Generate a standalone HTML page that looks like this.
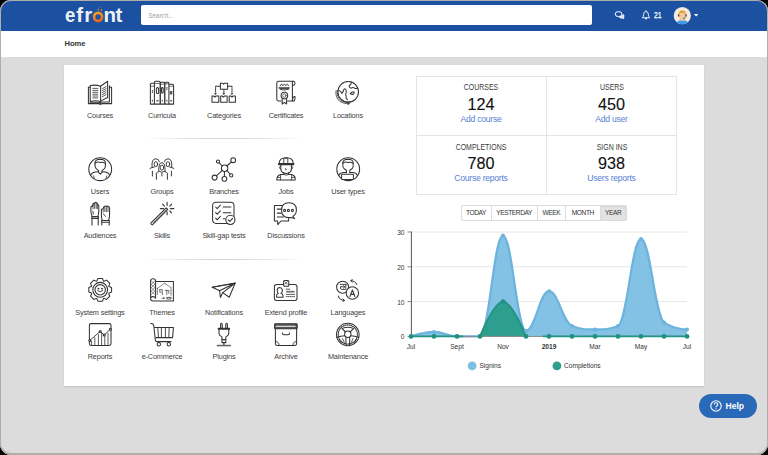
<!DOCTYPE html>
<html><head><meta charset="utf-8">
<style>
*{margin:0;padding:0;box-sizing:border-box}
html,body{width:768px;height:455px;overflow:hidden;background:#000;font-family:"Liberation Sans",sans-serif}
.abs{position:absolute}
.logo{position:absolute;top:3.3px;font-size:20.5px;line-height:24px;font-weight:bold;color:#eef0f5}
#win{position:absolute;left:0;top:0;width:768px;height:455px;border-radius:11px;background:#dcdcdc;overflow:hidden}
#frame{position:absolute;left:0;top:0;width:768px;height:455px;border-radius:11px;border-style:solid;border-color:#b0aeab;border-width:1.3px 1.8px 2px 1.4px}
#hdr{position:absolute;left:0;top:0;width:768px;height:30.8px;background:#1b51a0}
#crumb{position:absolute;left:0;top:30.8px;width:768px;height:26.2px;background:#fff}
#search{position:absolute;left:141px;top:5.4px;width:451px;height:19.8px;background:#fff;border-radius:2px}
#card{position:absolute;left:64px;top:65px;width:640px;height:321px;background:#fff;box-shadow:0 1.5px 1.5px rgba(60,60,110,0.13)}
.ic{position:absolute;width:32px;height:32px;fill:none;stroke:#333;stroke-width:1.05;stroke-linecap:round;stroke-linejoin:round}
.lb{position:absolute;width:80px;text-align:center;font-size:7.3px;line-height:10px;color:#404040;white-space:nowrap;letter-spacing:-0.15px}
.sep{position:absolute;left:143px;width:162px;height:1px;background:linear-gradient(90deg,rgba(220,220,220,0),#dadada 35%,#d8d8d8 50%,#dadada 65%,rgba(220,220,220,0))}
.sl{position:absolute;width:120px;text-align:center;font-size:8.5px;line-height:9px;color:#3a3a3a;white-space:nowrap;transform:scaleX(0.82);transform-origin:50% 0}
.sn{position:absolute;width:120px;text-align:center;font-size:16.2px;-webkit-text-stroke:0.1px #111;line-height:18px;color:#111;white-space:nowrap}
.sa{position:absolute;width:120px;text-align:center;font-size:8.6px;line-height:10px;color:#5682d4;white-space:nowrap;letter-spacing:-0.25px}
.tb{position:absolute;top:205.3px;height:15.6px;text-align:center;font-size:6.6px;color:#333;letter-spacing:-0.4px}
.tb span{position:absolute;left:0;right:0;line-height:8px}
.yl{position:absolute;left:384px;width:20.5px;text-align:right;font-size:6.6px;line-height:8px;color:#333}
.xl{position:absolute;width:40px;text-align:center;font-size:6.6px;line-height:8px;color:#333}
.lg{position:absolute;font-size:6.6px;line-height:8px;color:#333;white-space:nowrap}
#help{position:absolute;left:699px;top:393.8px;width:58px;height:24.5px;border-radius:12.5px;background:#2a69b7}
</style></head><body>
<div id="win">
 <div id="hdr">
  <div class="logo" style="left:64.6px;transform:scaleX(0.9);transform-origin:0 0">e</div><div class="logo" style="left:76.2px">f</div><div class="logo" style="left:84.2px">r</div><div class="logo" style="left:103.6px">n</div><div class="logo" style="left:115.4px">t</div>
  <svg class="abs" style="left:90px;top:4px" width="16" height="22" viewBox="0 0 16 22">
   <defs><linearGradient id="og" x1="0" y1="0" x2="0.3" y2="1"><stop offset="0" stop-color="#f7a21f"/><stop offset="1" stop-color="#ec6a1c"/></linearGradient></defs>
   <circle cx="8.1" cy="12.9" r="4.0" fill="none" stroke="url(#og)" stroke-width="2.7"/>
   <circle cx="8.4" cy="5.6" r="0.75" fill="#f49a22"/><circle cx="11.4" cy="6.0" r="0.85" fill="#f49a22"/><circle cx="10" cy="3.6" r="0.45" fill="#e8902a"/><circle cx="11.6" cy="2.4" r="0.35" fill="#d08a40"/>
  </svg>
  <div id="search"><div class="abs" style="left:7px;top:5.43px;font-size:8px;line-height:10px;font-style:italic;color:#a0a0a0;transform:scaleX(0.8);transform-origin:0 0">Search...</div></div>
  <svg class="abs" style="left:612px;top:9px" width="16" height="12" viewBox="0 0 16 12" fill="none" stroke="#fff" stroke-width="1">
   <ellipse cx="6.6" cy="5.1" rx="3.4" ry="2.5"/><path d="M7.4,8.0 Q10.4,8.4 11.4,5.6 Q12.4,6.8 11.6,8.4 L11.8,9.4 L10.2,9.0 Q8.4,9.4 7.4,8.0 Z" fill="#fff" fill-opacity="0.75"/>
  </svg>
  <svg class="abs" style="left:640px;top:9px" width="12" height="12" viewBox="0 0 12 12" fill="none" stroke="#fff" stroke-width="0.9">
   <path d="M2.2,8.8 Q3.6,7.8 3.6,5.6 Q3.6,2.6 6,2.5 Q8.4,2.6 8.4,5.6 Q8.4,7.8 9.8,8.8 Z"/><circle cx="6" cy="1.8" r="0.6" fill="#fff" stroke="none"/><path d="M5.1,9.5 H6.9" stroke-width="1.3"/>
  </svg>
  <div class="abs" style="left:653.6px;top:9.99px;font-size:8.4px;line-height:10px;color:#fff;-webkit-text-stroke:0.25px #fff;transform:scaleX(0.82);transform-origin:0 0">21</div>
  <svg class="abs" style="left:673px;top:7px" width="18" height="18" viewBox="0 0 18 18">
   <defs><clipPath id="av"><circle cx="9.3" cy="8.7" r="8.6"/></clipPath></defs>
   <circle cx="9.3" cy="8.7" r="8.6" fill="#f4ebdf"/>
   <g clip-path="url(#av)">
    <path d="M2,18 Q3,13.2 9.3,13.2 Q15.6,13.2 16.6,18 Z" fill="#3b9be6"/>
    <path d="M6.6,12.6 Q9.3,15.4 12,12.6 L11.4,11 H7.2 Z" fill="#efc39a"/>
    <ellipse cx="9.3" cy="8.4" rx="3.4" ry="4.2" fill="#f0c8a0"/>
    <path d="M5.8,7.4 Q5.6,3.6 9.3,3.4 Q13,3.6 12.8,7.4 Q12,5.4 9.3,5.4 Q6.6,5.4 5.8,7.4 Z" fill="#e79a2c"/>
    <path d="M5.6,7.2 V9.6 M13,7.2 V9.6" stroke="#5a2a1a" stroke-width="1.2"/>
    <path d="M12.6,9.6 Q12.4,11.6 10,11.8" stroke="#333" stroke-width="0.6" fill="none"/>
   </g>
  </svg>
  <svg class="abs" style="left:694px;top:13.5px" width="5" height="3" viewBox="0 0 5 3"><path d="M0,0 H4.4 L2.2,2.6 Z" fill="#fff"/></svg>
 </div>
 <div id="crumb"><div class="abs" style="left:64.5px;top:7.87px;font-size:7.6px;line-height:9px;font-weight:bold;color:#333">Home</div></div>
 <div id="card"></div>
 <div class="sep" style="top:138px"></div>
 <div class="sep" style="top:259px"></div>
 <svg class="ic" style="left:84px;top:77px" viewBox="0 0 32 32">
<path d="M6.2,24.6 V8.6 Q11.3,7.4 16.6,9.2 V24.4 Q11.5,23.0 6.2,24.6 Z"/>
<path d="M16.9,9.0 L23.6,4.2 V20.5 L16.9,23.9"/>
<path d="M4.4,10.2 V26.6 H14.2 Q15.9,26.6 16.3,27.6 Q16.8,26.6 18.4,26.6 H27.6 V10.2 H25.4 M25.4,8.8 V25.0 H18.2 Q16.8,25.2 16.4,26.0"/>
<path d="M4.4,10.2 H6.2 M6.2,25.2 H14 Q15.6,25.2 16.4,26.2"/>
<path d="M8.8,11.4 H13.8 M8.8,13.4 H13.8 M8.8,15.3 H13.8 M8.8,17.2 H13.8 M8.8,19.0 H13.8 M8.8,20.9 H13.8" stroke-width="0.8"/>
<path d="M18.4,11.6 L22,9.6 M18.4,13.6 L22,11.6 M18.4,15.6 L22,13.6 M18.4,17.6 L22,15.6 M18.4,19.6 L22,17.6" stroke-width="0.8"/>
</svg><div class="lb" style="left:60px;top:110.57px">Courses</div><svg class="ic" style="left:146px;top:77px" viewBox="0 0 32 32">
<path d="M4.4,27 V7.6 Q4.4,6.3 5.6,6.3 H8.4 M8.4,27 V5.4 Q8.4,4.2 9.6,4.2 H12.9 Q14.1,4.2 14.1,5.4 V27 M14.4,27 V6.0 Q14.4,5.3 15.1,5.3 H17.9 Q18.6,5.3 18.6,6.0 V27 M18.9,27 V6.3 Q18.9,5.3 19.9,5.3 H21.9 Q22.9,5.3 22.9,6.3 V27 M22.9,7.2 H26.6 Q27.6,7.2 27.6,8.2 V27 M4.4,27.1 H27.6"/>
<rect x="10.4" y="10.6" width="2.2" height="5.9" rx="1.1"/>
<rect x="15.5" y="10.6" width="1.7" height="5.5" rx="0.85"/>
<path d="M8.6,6.4 H13.9 M14.6,7.2 H18.4 M19.1,6.8 H22.7 M23.1,9.2 H27.4 M4.6,9.2 H8.2" stroke-width="0.7"/>
<path d="M6.4,13.4 V14.0 M6.4,15.0 V15.6 M20.9,10.4 V11 M20.9,12 V12.6 M6.4,23.2 V24.2 M16.3,23.2 V24.2 M20.9,23.2 V24.2" stroke-width="0.9"/>
<rect x="23.9" y="14" width="2.4" height="3.5" fill="#555" stroke="none"/>
<rect x="10.3" y="23.2" width="2.4" height="1.2" fill="#444" stroke="none"/>
<rect x="24.2" y="23.2" width="2" height="1.2" fill="#444" stroke="none"/>
</svg><div class="lb" style="left:122px;top:110.57px">Curricula</div><svg class="ic" style="left:208px;top:77px" viewBox="0 0 32 32">
<path d="M12.4,12.3 V6.2 H14.6 L15.6,7.2 L16.6,6.2 H19.6 V12.3 Z"/>
<path d="M4.0,25.2 V19 H5.6 L6.8,20 L8.0,19 H10.8 V25.2 Z M12.7,25.2 V19 H14.2 L15.4,20 L16.6,19 H19.1 V25.2 Z M21.2,25.2 V19 H22.8 L24,20 L25.2,19 H27.4 V25.2 Z"/>
<path d="M12.4,9.2 H7.6 V10.2 M19.6,9.2 H24.0 V10.2 M15.9,12.3 V13.2"/>
<path d="M7.6,11.6 V15.6 M15.9,14.2 V15.6 M24.0,11.6 V15.6" stroke-dasharray="1.1 1.0"/>
<path d="M6.8,16.0 L8.4,16.0 L7.6,17.6 Z M15.1,16.0 L16.7,16.0 L15.9,17.6 Z M23.2,16.0 L24.8,16.0 L24,17.6 Z" fill="#333" stroke-width="0.5"/>
</svg><div class="lb" style="left:184px;top:110.57px">Categories</div><svg class="ic" style="left:270px;top:77px" viewBox="0 0 32 32">
<path d="M22.2,23.9 H17.6 M11.2,23.9 H8.4 Q6.8,23.9 6.8,22.3 V5.9 Q6.8,4.3 8.4,4.3 H23.6"/>
<path d="M23.6,4.3 Q25.2,4.6 25,6.6 Q24.6,8.4 22.4,8.4 M22.4,4.6 V23.6 Q22.8,19 25,19.6 Q25.4,22 24.2,23.9 H22.4"/>
<path d="M10.2,8.8 L11.6,6.8 L13,8.8 L14.4,6.8 L15.8,8.8 L17.2,6.8 L18.6,8.8" stroke-width="0.8"/>
<path d="M9.2,10.4 H19.4 L18.8,12.0 H9.8 Z" fill="#555" stroke-width="0.6"/>
<path d="M10.4,12.4 Q14.4,14.0 18.4,12.4" stroke-width="0.8"/>
<path d="M12.2,21.6 V27.0 L14.4,25.4 L16.6,27.0 V21.6"/>
<circle cx="14.4" cy="18.6" r="3.3" fill="#fff"/>
<circle cx="14.4" cy="18.6" r="1.7" stroke-width="0.7"/>
</svg><div class="lb" style="left:246px;top:110.57px">Certificates</div><svg class="ic" style="left:332px;top:77px" viewBox="0 0 32 32">
<circle cx="16.2" cy="14.8" r="10.3"/>
<path d="M5.2,13.4 Q4.4,19.6 8.8,23.4 Q12.6,26.2 18.6,25.2" stroke-width="0.8"/>
<path d="M4.0,13.8 Q3.0,20.2 7.8,24.4 Q12,27.4 17.8,26.4" stroke-width="0.8"/>
<path d="M16.2,25.6 V27.4" stroke-width="1.2"/>
<path d="M18.8,4.8 Q19.8,6.4 18.8,7.4 Q16.8,8.0 17.4,10.0 Q18.6,11.8 20,10.8 Q21.4,10.0 22.6,11.2 Q24.2,11.8 25.6,11.0" />
<path d="M6.8,13.6 Q9.4,14.2 9.8,16.4 Q11.4,14.8 12.0,12.2 Q13.4,11.0 14.0,13.2 Q14.8,15.2 13.6,17.4 Q14.4,19.4 14.2,21.4 L15.4,22.6"/>
<path d="M18.4,16.6 Q19.4,15.0 21.8,14.8 Q22.8,15.6 21.2,17.2 Q19.6,17.8 18.4,16.6 Z"/>
</svg><div class="lb" style="left:308px;top:110.57px">Locations</div><svg class="ic" style="left:84px;top:153px" viewBox="0 0 32 32">
<circle cx="16.2" cy="16.2" r="11.4"/>
<path d="M11.0,10.4 Q10.6,6.4 16.2,6.2 Q21.8,6.4 21.4,10.4 Q18.8,8.6 16.6,9.6 Q13.6,8.2 11.0,10.4 Z"/>
<path d="M11.0,10.4 Q10.6,14.4 12.4,15.8 L14.6,17.6 V19.4 L16.3,21.2 L18.0,19.4 V17.6 L20.2,15.8 Q21.8,14.4 21.4,10.4"/>
<path d="M6.8,22.2 Q7.6,19.6 11.0,19.0 L14.6,18.8 M18.0,18.8 L21.4,19.0 Q24.8,19.6 25.6,22.2"/>
<path d="M9.6,22.8 L10.4,25.4 M22.8,22.8 L22.0,25.4" stroke-width="0.8"/>
</svg><div class="lb" style="left:60px;top:187.07px">Users</div><svg class="ic" style="left:146px;top:153px" viewBox="0 0 32 32">
<g stroke-width="0.95">
<path d="M6.1,14.4 Q5.2,5.8 9.7,5.8 Q12.8,5.8 13.4,8.8"/>
<ellipse cx="9.85" cy="11.2" rx="1.75" ry="2.5"/>
<path d="M4.0,15.4 Q5.8,14.4 8.2,14.0 M6.4,18.2 V23.0"/>
<path d="M25.7,14.4 Q26.6,5.8 22.1,5.8 Q19.0,5.8 18.4,8.8"/>
<ellipse cx="21.95" cy="11.2" rx="1.75" ry="2.5"/>
<path d="M27.8,15.4 Q26.0,14.4 23.6,14.0 M25.4,18.2 V23.0"/>
<path d="M12.8,18.4 Q12.2,9.6 15.9,9.6 Q19.6,9.6 19.0,18.4"/>
<ellipse cx="15.9" cy="14.6" rx="1.8" ry="2.6"/>
<path d="M10.2,20.4 Q11.2,18.6 13.6,18.4 Q15.9,20.2 18.2,18.4 Q20.6,18.6 21.6,20.4 M10.4,20.8 V26.4 M21.4,20.8 V26.4 M15.9,20.4 V23.0"/>
</g>
</svg><div class="lb" style="left:122px;top:187.07px">Groups</div><svg class="ic" style="left:208px;top:153px" viewBox="0 0 32 32">
<circle cx="16.6" cy="15.2" r="3.2"/>
<circle cx="10.0" cy="8.6" r="1.6"/>
<circle cx="25.2" cy="7.2" r="2.4"/>
<circle cx="6.6" cy="24.6" r="2.5"/>
<circle cx="16.4" cy="25.8" r="2.4"/>
<circle cx="23.2" cy="22.4" r="1.6"/>
<path d="M11.2,9.8 L14.4,13 M23.4,9 L18.8,13 M8.4,22.8 L14.3,17.3 M16.4,18.4 V23.4 M18.9,17.4 L22.0,21.2"/>
</svg><div class="lb" style="left:184px;top:187.07px">Branches</div><svg class="ic" style="left:270px;top:153px" viewBox="0 0 32 32">
<path d="M9.2,10.6 Q9.2,4.8 16.2,4.8 Q23.2,4.8 23.2,10.6 Z" />
<path d="M8.6,10.4 H23.8 V11.6 H8.6 Z" fill="#333"/>
<path d="M13.8,10.4 V5.2 H17.8 V10.4" stroke-width="0.9"/>
<path d="M10.8,11.8 V15.8 Q10.8,20.4 16.2,20.4 Q21.4,20.4 21.4,15.8 V11.8"/>
<path d="M10.6,13.4 Q9.2,13.4 9.4,14.8 Q9.6,16 10.8,16 M21.6,13.4 Q23,13.4 22.8,14.8 Q22.6,16 21.4,16" stroke-width="0.8"/>
<path d="M15.6,15.4 L16.4,16.8 H15.6" stroke-width="0.8"/>
<path d="M13.8,19.8 V21.4 M18.6,19.8 V21.4 M6.8,27 Q6.6,22.6 10.8,21.6 L13.8,21.4 Q16.2,22.6 18.6,21.4 L21.6,21.6 Q25.6,22.6 25.2,27 Z"/>
<path d="M10.6,21.8 V27 M21.6,21.8 V27 M7.4,24.4 H10.6 M21.6,24.4 H24.8" stroke-width="0.8"/>
</svg><div class="lb" style="left:246px;top:187.07px">Jobs</div><svg class="ic" style="left:332px;top:153px" viewBox="0 0 32 32">
<circle cx="16.2" cy="16.2" r="11.4"/>
<path d="M10.8,10.4 Q10.4,6.4 16.0,6.2 Q21.6,6.4 21.2,10.4 Q18.6,8.6 16.4,9.6 Q13.4,8.2 10.8,10.4 Z"/>
<path d="M10.8,10.4 Q10.4,14.2 12.2,15.8 L14.4,17.2 V19.6 M17.8,19.6 V17.2 L20.0,15.8 Q21.6,14.2 21.2,10.4"/>
<path d="M7.0,22.4 Q7.6,19.8 11,19.4 L14.4,19.4 M17.8,19.4 L21.2,19.4 Q24.6,19.8 25.2,22.4"/>
<rect x="9.6" y="21.2" width="11.8" height="5.2" rx="0.6" fill="#fff"/>
</svg><div class="lb" style="left:308px;top:187.07px">User types</div><svg class="ic" style="left:84px;top:198px" viewBox="0 0 32 32">
<path d="M8.2,18.6 Q6.6,15.2 6.8,12 L7.0,8.6 Q7.6,8 8.8,8.2 L9.0,6.0 Q9.6,5.0 10.6,5.6 Q11.0,4.0 12.2,4.4 Q13.4,4.8 13.4,6.2 Q14.8,6.4 14.8,8 V12.8 Q14.8,16.0 13.8,18.6 Z"/>
<path d="M9,6 V11 M10.6,5.6 V10.4 M12.2,4.8 V10.4 M13.4,6.2 V10.8" stroke-width="0.8"/>
<path d="M8.8,13.2 Q10,15.6 9.2,16.4" stroke-width="0.9"/>
<path d="M7.8,18.6 H14.4 V20.4 H7.8 Z M8.0,20.4 V27 M14.2,20.4 V27"/>
<path d="M18.2,22.4 Q17.2,19.2 17.4,15.6 V11.6 Q17.8,10.8 19.2,10.8 Q19.4,8.6 20.6,8.2 Q21.6,7.8 22.4,8.4 Q23.2,7.6 24.2,8.2 Q25.6,8.8 25.6,10.6 V16.2 Q25.6,20 24.4,22.4 Z"/>
<path d="M19.2,10.8 V14 M20.8,8.4 V13.6 M22.4,8.4 V13.6 M24.0,8.4 V13.6" stroke-width="0.8"/>
<path d="M19.4,15.8 Q20.4,17.4 21.4,18.4" stroke-width="0.9"/>
<path d="M17.6,22.4 H25.4 V24.2 H17.6 Z M17.8,24.2 V27 M25.2,24.2 V27"/>
</svg><div class="lb" style="left:60px;top:231.07px">Audiences</div><svg class="ic" style="left:146px;top:198px" viewBox="0 0 32 32">
<path d="M4.8,25.2 L20.2,9.8 L21.8,11.4 L6.4,26.8 Q5.0,26.6 4.8,25.2 Z"/>
<path d="M7,24.8 L20.4,11.4" stroke-width="0.6" stroke-dasharray="0.6 0.6"/>
<path d="M21.1,4.4 V7.4 M14.4,10.6 H17.6 M24.4,10.6 H27.8 M21.1,13.8 V16.8 M16.6,6.2 L18.4,8.2 M25.6,6.2 L23.8,8.2 M25.6,14.8 L23.8,13" stroke-width="1.1"/>
</svg><div class="lb" style="left:122px;top:231.07px">Skills</div><svg class="ic" style="left:208px;top:198px" viewBox="0 0 32 32">
<rect x="4.6" y="4.2" width="21.4" height="21.2" rx="3.4"/>
<path d="M7.6,9.0 L9.2,10.6 L12.4,7.2 M7.6,14.6 L9.2,16.2 L12.4,12.8 M7.6,20.2 L9.2,21.8 L12.4,18.4"/>
<path d="M15.2,9.0 H22.8 M15.2,14.8 H22.8 M15.2,20.8 H17.0" stroke-width="1.1"/>
<circle cx="22.4" cy="21.8" r="4.6" fill="#fff"/>
<path d="M20.2,22.0 L21.8,23.4 L24.6,20.4"/>
</svg><div class="lb" style="left:184px;top:231.07px">Skill-gap tests</div><svg class="ic" style="left:270px;top:198px" viewBox="0 0 32 32">
<path d="M13.2,7.4 H4.4 V23.0 H7.6 L7.8,26.6 L11.0,23.0 H18.6 V20.6"/>
<path d="M7.4,11.2 H11.8 M7.4,15.2 H11.2 M7.4,19 H13.4" stroke-width="1.2"/>
<path d="M19.0,4.8 Q26.4,4.8 26.4,12.0 Q26.4,16.4 22.8,18.4 L24.6,20.6 L20.6,19.4 Q19.8,19.6 19.0,19.6 Q11.6,19.6 11.6,12.2 Q11.6,4.8 19.0,4.8 Z" fill="#fff"/>
<circle cx="14.6" cy="12.4" r="1.05"/>
<circle cx="18.4" cy="12.4" r="1.05"/>
<circle cx="22.4" cy="12.4" r="1.05"/>
</svg><div class="lb" style="left:246px;top:231.07px">Discussions</div><svg class="ic" style="left:84px;top:274px" viewBox="0 0 32 32"><path d="M12.89,7.00 L13.90,4.43 L18.50,4.43 L19.51,7.00 L20.08,7.24 L22.61,6.13 L25.87,9.39 L24.76,11.92 L25.00,12.49 L27.57,13.50 L27.57,18.10 L25.00,19.11 L24.76,19.68 L25.87,22.21 L22.61,25.47 L20.08,24.36 L19.51,24.60 L18.50,27.17 L13.90,27.17 L12.89,24.60 L12.32,24.36 L9.79,25.47 L6.53,22.21 L7.64,19.68 L7.40,19.11 L4.83,18.10 L4.83,13.50 L7.40,12.49 L7.64,11.92 L6.53,9.39 L9.79,6.13 L12.32,7.24 Z"/>
<circle cx="16.2" cy="15.8" r="7.4"/>
<circle cx="16.2" cy="15.8" r="5.2"/>
<path d="M13.6,16.6 Q16.2,19.2 18.8,16.6" stroke-width="0.9"/>
<circle cx="14.4" cy="14.6" r="0.45" fill="#333"/><circle cx="18.0" cy="14.6" r="0.45" fill="#333"/></svg><div class="lb" style="left:60px;top:308.07px">System settings</div><svg class="ic" style="left:146px;top:274px" viewBox="0 0 32 32">
<path d="M9.6,7.4 H27.4 V27.0 H7.2 Q4.6,27.0 4.6,24.6 V6.8 Q4.6,4.8 7.0,4.8 Q9.6,4.8 9.6,6.8 V24.2 Q8.6,22.6 7.0,22.6 Q4.6,22.6 4.6,24.6"/>
<path d="M5.4,7 L8.8,10.2 M5.4,10.4 L8.8,13.6 M5.4,13.8 L8.8,17 M5.4,17.2 L8.8,20.4 M8.8,7 L5.4,10.2 M8.8,10.4 L5.4,13.6 M8.8,13.8 L5.4,17 M8.8,17.2 L5.4,20.4" stroke-width="0.5"/>
<path d="M11.4,14.4 L18.6,9.2 L25,13.6 M11.4,14.4 V21 M25,13.6 V21" stroke-width="0.75" stroke-dasharray="0.4 1.0"/>
<path d="M13.8,15.6 H16.4 V20.6 M13.8,15.6 V18.2 H15.2 M19.2,16.4 H22.8 V19.6 M20.8,16.4 V21" stroke-width="0.7" stroke-dasharray="0.5 0.7"/>
<path d="M15.2,24.8 L17.6,23.2 H18.6 V24.8 Z" fill="#444" stroke="none"/>
<rect x="21.2" y="23.4" width="3.8" height="1.6" stroke-width="0.8"/>
</svg><div class="lb" style="left:122px;top:308.07px">Themes</div><svg class="ic" style="left:208px;top:274px" viewBox="0 0 32 32">
<path d="M4.2,13.2 L27.2,9.0 L21.2,23.2 L14.8,18.6 L12.4,23.4 L11.6,16.8 Z"/>
<path d="M11.6,16.8 L27.2,9.0 L14.8,18.6 M4.2,13.2 L26,9.6"/>
</svg><div class="lb" style="left:184px;top:308.07px">Notifications</div><svg class="ic" style="left:270px;top:274px" viewBox="0 0 32 32">
<rect x="4.4" y="10.4" width="22.6" height="16" rx="2.2"/>
<rect x="13.6" y="6.4" width="5.2" height="5.8" rx="1" fill="#fff"/>
<path d="M14.8,7.6 L17.4,10.2 M17.4,7.6 L14.8,10.2" stroke-width="0.7"/>
<path d="M6.6,23.2 V21.6 Q6.6,19.8 8.4,19.6 Q7,18.4 7.2,15.8 Q7.6,13.4 9.6,13.4 Q11.8,13.6 12.4,15.8 Q12.6,18.4 11.0,19.6 Q12.8,19.8 13.0,21.6 V23.2 Z"/>
<path d="M16.2,15.2 H19.8 M16.2,20.4 H24.6" stroke-width="0.8"/>
<rect x="16.2" y="16.8" width="8.4" height="1.8" fill="#777" stroke="none"/>
<path d="M16.2,22.6 H24.6" stroke-width="0.8" stroke-dasharray="1 0.9"/>
</svg><div class="lb" style="left:246px;top:308.07px">Extend profile</div><svg class="ic" style="left:332px;top:274px" viewBox="0 0 32 32">
<circle cx="10.6" cy="13.2" r="6.0"/>
<circle cx="20.4" cy="19.0" r="6.2" fill="#fff"/>
<path d="M18.0,22.4 L20.4,16.0 L22.8,22.4 M18.8,20.4 H22" stroke-width="1.1"/>
<path d="M8.2,10.4 H14.2 M13.8,10.4 V15.8 M9.4,12.8 H12.8 M11.6,11.6 L12.8,12.8 L11.6,14.0 M8.6,12.6 Q7.4,15.4 9.8,15.4 H12.6" stroke-width="0.9"/>
<path d="M19.0,6.8 Q23.4,6.6 24.8,10.6 M19.0,6.8 L20.2,5.4 M19.0,6.8 L20.4,8.0" stroke-width="1"/>
<path d="M6.4,22.0 Q7.2,26.4 12.2,26.4 M12.2,26.4 L11,25 M12.2,26.4 L11.0,27.6" stroke-width="1"/>
</svg><div class="lb" style="left:308px;top:308.07px">Languages</div><svg class="ic" style="left:84px;top:319px" viewBox="0 0 32 32">
<path d="M5.4,21.6 V6.2 Q5.4,4.6 7,4.6 H25.4 Q27,4.6 27,6.2 V24.8 Q27,26.4 25.4,26.4 H7 Q5.4,26.4 5.4,24.8 V22.8"/>
<path d="M5.8,21.4 L16.2,12.4 L20.2,16.0 L26.4,10.2" stroke-width="0.9"/>
<circle cx="5.8" cy="21.4" r="1" fill="#fff"/><circle cx="16.2" cy="12.4" r="1" fill="#fff"/><circle cx="20.2" cy="16.0" r="1" fill="#fff"/><circle cx="26.4" cy="10.2" r="1" fill="#fff"/>
<path d="M10.8,18.6 V26 M14.4,15.6 V26 M17.6,14 V26 M20.8,17.4 V26 M24.0,14.2 V26 M7.6,22 V26" stroke-width="0.8"/>
</svg><div class="lb" style="left:60px;top:352.07px">Reports</div><svg class="ic" style="left:146px;top:319px" viewBox="0 0 32 32">
<path d="M4.8,4.6 Q7.6,4.4 7.8,7 L9.4,21.6 Q9.8,22.6 11,22.6 H25"/>
<path d="M8.6,8.4 H27.4 L26.6,18.6 H9.8"/>
<path d="M11.8,8.4 L12.4,18.6 M15.4,8.4 V18.6 M19.4,8.4 V18.6 M23.2,8.4 L22.8,18.6" stroke-width="0.9"/>
<circle cx="12.8" cy="25.2" r="1.7"/><circle cx="22.8" cy="25.2" r="1.7"/>
<path d="M12.8,22.6 V23.4 M22.8,22.6 V23.4"/>
</svg><div class="lb" style="left:122px;top:352.07px">e-Commerce</div><svg class="ic" style="left:208px;top:319px" viewBox="0 0 32 32">
<path d="M12.6,9.0 V5.4 Q12.6,4.2 13.4,4.2 Q14.2,4.2 14.2,5.4 V9.0 M17.8,9.0 V5.4 Q17.8,4.2 18.6,4.2 Q19.4,4.2 19.4,5.4 V9.0"/>
<path d="M10.4,9.2 H21.4 V10.2 H10.4 Z"/>
<path d="M11,10.2 V14.4 Q11,16.2 13.6,17.6 L14,18.4 V23.6 H17.8 V18.4 L18.2,17.6 Q20.8,16.2 20.8,14.4 V10.2"/>
<path d="M14,20.6 H17.8 M15.9,23.6 V26" />
<rect x="9.4" y="26.2" width="13.2" height="0.8" fill="#555" stroke="#555" stroke-width="0.6"/>
</svg><div class="lb" style="left:184px;top:352.07px">Plugins</div><svg class="ic" style="left:270px;top:319px" viewBox="0 0 32 32">
<rect x="4.6" y="4.8" width="22.6" height="5" rx="0.8" fill="#555"/>
<path d="M6.2,7.3 H25.6" stroke="#fff" stroke-width="1.1" stroke-dasharray="0.9 0.6"/>
<path d="M5.4,9.8 V24.8 Q5.4,26.4 7,26.4 H25 Q26.6,26.4 26.6,24.8 V9.8"/>
<path d="M12.4,14 Q12.4,15.8 14,15.8 H18 Q19.6,15.8 19.6,14"/>
<path d="M5.6,22.4 Q8.8,22.4 9.2,26.2 M26.4,22.4 Q23.2,22.4 22.8,26.2" stroke-width="0.9"/>
</svg><div class="lb" style="left:246px;top:352.07px">Archive</div><svg class="ic" style="left:332px;top:319px" viewBox="0 0 32 32">
<circle cx="15.8" cy="15.5" r="11.3"/>
<circle cx="15.8" cy="15.5" r="9.6" stroke-width="1.1" stroke-dasharray="0.9 1.1"/>
<circle cx="15.8" cy="15.2" r="3.2"/>
<path d="M13.6,13.0 L10.0,9.6 Q15.8,6.8 21.6,9.6 L18.0,13.0"/>
<path d="M4.8,18.2 Q8.8,17.0 12.8,16.8 M18.8,16.8 Q22.8,17.0 26.8,18.2"/>
<path d="M14.0,18.2 Q13.6,22 14.2,26.6 M17.6,18.2 Q18.0,22 17.4,26.6"/>
<path d="M7.2,20.4 L9.4,24.2 M10.6,19.6 L12.2,23.4 M24.4,20.4 L22.2,24.2 M21.0,19.6 L19.4,23.4" stroke-width="0.8"/>
</svg><div class="lb" style="left:308px;top:352.07px">Maintenance</div>
 <div class="abs" style="left:416px;top:75.5px;width:261px;height:119px;border:1px solid #e5e5e5"></div>
 <div class="abs" style="left:546px;top:75.5px;width:1px;height:119px;background:#e5e5e5"></div>
 <div class="abs" style="left:416px;top:134.8px;width:261px;height:1px;background:#e5e5e5"></div>
 <div class="sl" style="left:421px;top:83.05px">COURSES</div>
<div class="sn" style="left:421px;top:94.59px">124</div>
<div class="sa" style="left:421px;top:113.52px">Add course</div><div class="sl" style="left:551.5px;top:83.05px">USERS</div>
<div class="sn" style="left:551.5px;top:94.59px">450</div>
<div class="sa" style="left:551.5px;top:113.52px">Add user</div><div class="sl" style="left:421px;top:142.55px">COMPLETIONS</div>
<div class="sn" style="left:421px;top:154.09px">780</div>
<div class="sa" style="left:421px;top:173.02px">Course reports</div><div class="sl" style="left:551.5px;top:142.55px">SIGN INS</div>
<div class="sn" style="left:551.5px;top:154.09px">938</div>
<div class="sa" style="left:551.5px;top:173.02px">Users reports</div>
 <div class="tb" style="left:461px;width:30.0px;background:#fff"><span style="top:3.81px">TODAY</span></div><div class="tb" style="left:491px;width:46.3px;background:#fff"><span style="top:3.81px">YESTERDAY</span></div><div class="abs" style="left:490.5px;top:205.3px;width:1px;height:15.6px;background:#dcdcdc"></div><div class="tb" style="left:537.3px;width:28.2px;background:#fff"><span style="top:3.81px">WEEK</span></div><div class="abs" style="left:536.8px;top:205.3px;width:1px;height:15.6px;background:#dcdcdc"></div><div class="tb" style="left:565.5px;width:34.6px;background:#fff"><span style="top:3.81px">MONTH</span></div><div class="abs" style="left:565.0px;top:205.3px;width:1px;height:15.6px;background:#dcdcdc"></div><div class="tb" style="left:600.1px;width:26.4px;background:#e3e3e3;box-shadow:inset 0 1.5px 2px rgba(0,0,0,0.10)"><span style="top:3.81px">YEAR</span></div><div class="abs" style="left:599.6px;top:205.3px;width:1px;height:15.6px;background:#dcdcdc"></div>
 <div class="abs" style="left:460.5px;top:204.8px;width:166.5px;height:16.6px;border:1px solid #dcdcdc;border-radius:2px"></div>
 <svg class="abs" style="left:0;top:0" width="768" height="455" viewBox="0 0 768 455"><line x1="411" y1="301.60" x2="687" y2="301.60" stroke="#e6e6e6" stroke-width="1"/><line x1="411" y1="266.80" x2="687" y2="266.80" stroke="#e6e6e6" stroke-width="1"/><line x1="411" y1="232.00" x2="687" y2="232.00" stroke="#e6e6e6" stroke-width="1"/><path d="M411.00,336.40 C411.00,336.40 424.80,331.88 434.00,331.88 C443.20,331.88 447.80,336.40 457.00,336.40 C466.20,336.40 470.80,336.40 480.00,336.40 C489.20,336.40 493.80,235.48 503.00,235.48 C512.20,235.48 516.80,330.83 526.00,330.83 C535.20,330.83 539.80,291.16 549.00,291.16 C558.20,291.16 562.80,322.48 572.00,325.96 C581.20,329.44 585.80,329.44 595.00,329.44 C604.20,329.44 608.80,329.44 618.00,325.96 C627.20,322.48 631.80,238.96 641.00,238.96 C650.20,238.96 654.80,315.52 664.00,322.48 C673.20,329.44 687.00,329.44 687.00,329.44 L687,336.4 L411,336.4 Z" fill="#83c2e4"/><path d="M411.00,336.40 C411.00,336.40 424.80,331.88 434.00,331.88 C443.20,331.88 447.80,336.40 457.00,336.40 C466.20,336.40 470.80,336.40 480.00,336.40 C489.20,336.40 493.80,235.48 503.00,235.48 C512.20,235.48 516.80,330.83 526.00,330.83 C535.20,330.83 539.80,291.16 549.00,291.16 C558.20,291.16 562.80,322.48 572.00,325.96 C581.20,329.44 585.80,329.44 595.00,329.44 C604.20,329.44 608.80,329.44 618.00,325.96 C627.20,322.48 631.80,238.96 641.00,238.96 C650.20,238.96 654.80,315.52 664.00,322.48 C673.20,329.44 687.00,329.44 687.00,329.44" fill="none" stroke="#6cb4de" stroke-width="2.2"/><path d="M480.00,336.40 C480.00,336.40 493.80,301.60 503.00,301.60 C512.20,301.60 526.00,336.40 526.00,336.40 Z" fill="#2e9e8e"/><line x1="411" y1="336.4" x2="687" y2="336.4" stroke="#8a8a8a" stroke-width="1"/><path d="M480.00,336.40 C480.00,336.40 493.80,301.60 503.00,301.60 C512.20,301.60 526.00,336.40 526.00,336.40" fill="none" stroke="#239383" stroke-width="1.8"/><path d="M411,336.4 H463 M543,336.4 H687" fill="none" stroke="#239383" stroke-width="1.8"/><line x1="411.4" y1="231.5" x2="411.4" y2="336.8" stroke="#555" stroke-width="1"/><line x1="407.6" y1="336.40" x2="411" y2="336.40" stroke="#666" stroke-width="0.8"/><line x1="407.6" y1="301.60" x2="411" y2="301.60" stroke="#666" stroke-width="0.8"/><line x1="407.6" y1="266.80" x2="411" y2="266.80" stroke="#666" stroke-width="0.8"/><line x1="407.6" y1="232.00" x2="411" y2="232.00" stroke="#666" stroke-width="0.8"/><circle cx="434" cy="331.88" r="2" fill="#6cb4de"/><circle cx="503" cy="235.48" r="2" fill="#6cb4de"/><circle cx="526" cy="330.83" r="2" fill="#6cb4de"/><circle cx="549" cy="291.16" r="2" fill="#6cb4de"/><circle cx="572" cy="325.96" r="2" fill="#6cb4de"/><circle cx="595" cy="329.44" r="2" fill="#6cb4de"/><circle cx="618" cy="325.96" r="2" fill="#6cb4de"/><circle cx="641" cy="238.96" r="2" fill="#6cb4de"/><circle cx="664" cy="322.48" r="2" fill="#6cb4de"/><circle cx="687" cy="329.44" r="2" fill="#6cb4de"/><circle cx="411" cy="336.40" r="2.4" fill="#1f9181"/><circle cx="434" cy="336.40" r="2.4" fill="#1f9181"/><circle cx="457" cy="336.40" r="2.4" fill="#1f9181"/><circle cx="480" cy="336.40" r="2.4" fill="#1f9181"/><circle cx="503" cy="301.60" r="2.4" fill="#1f9181"/><circle cx="526" cy="336.40" r="2.4" fill="#1f9181"/><circle cx="549" cy="336.40" r="2.4" fill="#1f9181"/><circle cx="572" cy="336.40" r="2.4" fill="#1f9181"/><circle cx="595" cy="336.40" r="2.4" fill="#1f9181"/><circle cx="618" cy="336.40" r="2.4" fill="#1f9181"/><circle cx="641" cy="336.40" r="2.4" fill="#1f9181"/><circle cx="664" cy="336.40" r="2.4" fill="#1f9181"/><circle cx="687" cy="336.40" r="2.4" fill="#1f9181"/><circle cx="472.1" cy="365.9" r="4.4" fill="#7cbfe3"/><circle cx="556.9" cy="365.9" r="4.4" fill="#2e9e8e"/></svg>
 <div class="yl" style="top:333.31px">0</div><div class="yl" style="top:298.51px">10</div><div class="yl" style="top:263.71px">20</div><div class="yl" style="top:228.91px">30</div><div class="xl" style="left:391px;top:343.11px;">Jul</div><div class="xl" style="left:437px;top:343.11px;">Sept</div><div class="xl" style="left:483px;top:343.11px;">Nov</div><div class="xl" style="left:529px;top:343.11px;font-weight:bold">2019</div><div class="xl" style="left:575px;top:343.11px;">Mar</div><div class="xl" style="left:621px;top:343.11px;">May</div><div class="xl" style="left:667px;top:343.11px;">Jul</div>
 <div class="lg" style="left:479.4px;top:362.01px">Signins</div>
<div class="lg" style="left:564px;top:362.01px">Completions</div>
 <div id="help">
  <svg class="abs" style="left:10px;top:5.5px" width="14" height="14" viewBox="0 0 14 14" fill="none" stroke="#fff">
   <circle cx="7" cy="7" r="5.2" stroke-width="1.1"/>
   <path d="M5.2,5.6 Q5.2,3.8 7,3.8 Q8.8,3.8 8.8,5.4 Q8.8,6.4 7.6,6.9 Q7,7.2 7,8.2" stroke-width="1.1"/>
   <circle cx="7" cy="9.8" r="0.6" fill="#fff" stroke="none"/>
  </svg>
  <div class="abs" style="left:26.5px;top:7.42px;font-size:8.6px;line-height:10px;font-weight:bold;color:#fff">Help</div>
 </div>
</div>
<div id="frame"></div>
</body></html>
